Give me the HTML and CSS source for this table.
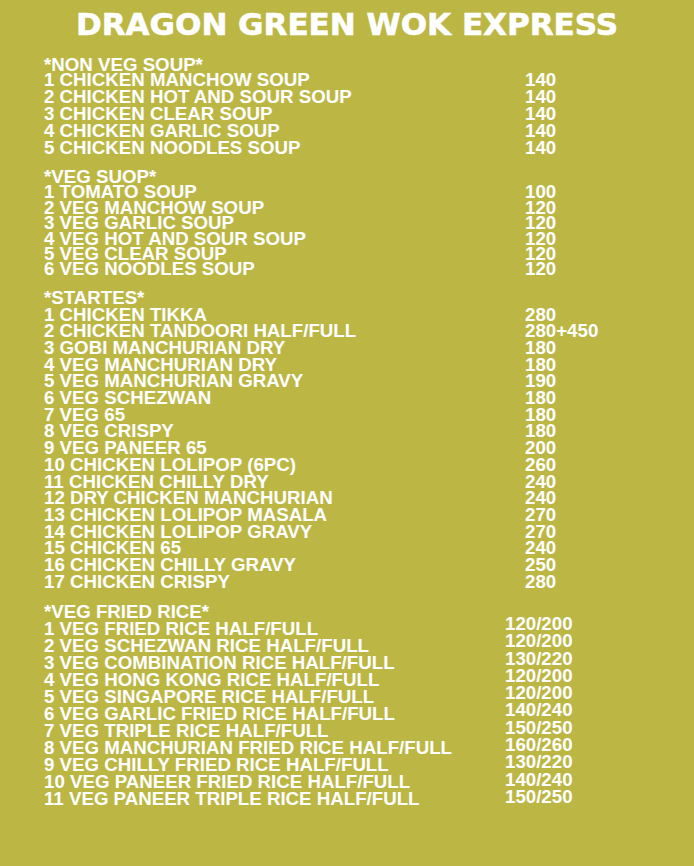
FILE: index.html
```html
<!DOCTYPE html>
<html lang="en">
<head>
<meta charset="utf-8">
<title>Dragon Green Wok Express</title>
<link rel="stylesheet" href="styles.css">
</head>
<body>
<main class="menu">
  <h1 class="title">DRAGON GREEN WOK EXPRESS</h1>

  <section class="sec sec-nonveg">
    <div class="names">
      <div class="head">*NON VEG SOUP*</div>
      <div>1 CHICKEN MANCHOW SOUP</div>
      <div>2 CHICKEN HOT AND SOUR SOUP</div>
      <div>3 CHICKEN CLEAR SOUP</div>
      <div>4 CHICKEN GARLIC SOUP</div>
      <div>5 CHICKEN NOODLES SOUP</div>
    </div>
    <div class="prices">
      <div>140</div>
      <div>140</div>
      <div>140</div>
      <div>140</div>
      <div>140</div>
    </div>
  </section>

  <section class="sec sec-veg">
    <div class="names">
      <div class="head">*VEG SUOP*</div>
      <div>1 TOMATO SOUP</div>
      <div>2 VEG MANCHOW SOUP</div>
      <div>3 VEG GARLIC SOUP</div>
      <div>4 VEG HOT AND SOUR SOUP</div>
      <div>5 VEG CLEAR SOUP</div>
      <div>6 VEG NOODLES SOUP</div>
    </div>
    <div class="prices">
      <div>100</div>
      <div>120</div>
      <div>120</div>
      <div>120</div>
      <div>120</div>
      <div>120</div>
    </div>
  </section>

  <section class="sec sec-starters">
    <div class="names">
      <div class="head">*STARTES*</div>
      <div>1 CHICKEN TIKKA</div>
      <div>2 CHICKEN TANDOORI HALF/FULL</div>
      <div>3 GOBI MANCHURIAN DRY</div>
      <div>4 VEG MANCHURIAN DRY</div>
      <div>5 VEG MANCHURIAN GRAVY</div>
      <div>6 VEG SCHEZWAN</div>
      <div>7 VEG 65</div>
      <div>8 VEG CRISPY</div>
      <div>9 VEG PANEER 65</div>
      <div>10 CHICKEN LOLIPOP (6PC)</div>
      <div>11 CHICKEN CHILLY DRY</div>
      <div>12 DRY CHICKEN MANCHURIAN</div>
      <div>13 CHICKEN LOLIPOP MASALA</div>
      <div>14 CHICKEN LOLIPOP GRAVY</div>
      <div>15 CHICKEN 65</div>
      <div>16 CHICKEN CHILLY GRAVY</div>
      <div>17 CHICKEN CRISPY</div>
    </div>
    <div class="prices">
      <div>280</div>
      <div>280+450</div>
      <div>180</div>
      <div>180</div>
      <div>190</div>
      <div>180</div>
      <div>180</div>
      <div>180</div>
      <div>200</div>
      <div>260</div>
      <div>240</div>
      <div>240</div>
      <div>270</div>
      <div>270</div>
      <div>240</div>
      <div>250</div>
      <div>280</div>
    </div>
  </section>

  <section class="sec sec-rice">
    <div class="names">
      <div class="head">*VEG FRIED RICE*</div>
      <div>1 VEG FRIED RICE HALF/FULL</div>
      <div>2 VEG SCHEZWAN RICE HALF/FULL</div>
      <div>3 VEG COMBINATION RICE HALF/FULL</div>
      <div>4 VEG HONG KONG RICE HALF/FULL</div>
      <div>5 VEG SINGAPORE RICE HALF/FULL</div>
      <div>6 VEG GARLIC FRIED RICE HALF/FULL</div>
      <div>7 VEG TRIPLE RICE HALF/FULL</div>
      <div>8 VEG MANCHURIAN FRIED RICE HALF/FULL</div>
      <div>9 VEG CHILLY FRIED RICE HALF/FULL</div>
      <div>10 VEG PANEER FRIED RICE HALF/FULL</div>
      <div>11 VEG PANEER TRIPLE RICE HALF/FULL</div>
    </div>
    <div class="prices">
      <div>120/200</div>
      <div>120/200</div>
      <div>130/220</div>
      <div>120/200</div>
      <div>120/200</div>
      <div>140/240</div>
      <div>150/250</div>
      <div>160/260</div>
      <div>130/220</div>
      <div>140/240</div>
      <div>150/250</div>
    </div>
  </section>
</main>
</body>
</html>
```

FILE: styles.css
```css
html, body {
  margin: 0;
  padding: 0;
  background: #bcb745;
}

body {
  width: 694px;
  min-height: 866px;
  color: #ffffff;
  font-family: "Liberation Sans", Arial, sans-serif;
}

.menu {
  padding: 7px 0 0 44px;
}

.title {
  margin: 0 0 0 -44px;
  text-align: center;
  font-family: "DejaVu Sans", sans-serif;
  font-weight: bold;
  font-size: 31px;
  line-height: 34px;
  -webkit-text-stroke: 0.6px #ffffff;
}

.sec {
  display: flex;
  font-weight: bold;
  font-size: 18.7px;
  white-space: nowrap;
}

.names {
  width: 481px;
}

.sec-nonveg {
  margin-top: 15px;
  line-height: 17px;
}

.sec-nonveg .head {
  margin-bottom: -2px;
}

.sec-nonveg .prices {
  padding-top: 15px;
}

.sec-veg {
  margin-top: 13px;
  line-height: 15.4px;
}

.sec-veg .prices {
  padding-top: 15.4px;
}

.sec-starters {
  margin-top: 13px;
  line-height: 16.7px;
}

.sec-starters .prices {
  padding-top: 16.7px;
}

.sec-rice {
  margin-top: 12px;
  line-height: 17px;
}

.sec-rice .names {
  width: 461px;
}

.sec-rice .prices {
  padding-top: 12.5px;
  line-height: 17.3px;
}
```
